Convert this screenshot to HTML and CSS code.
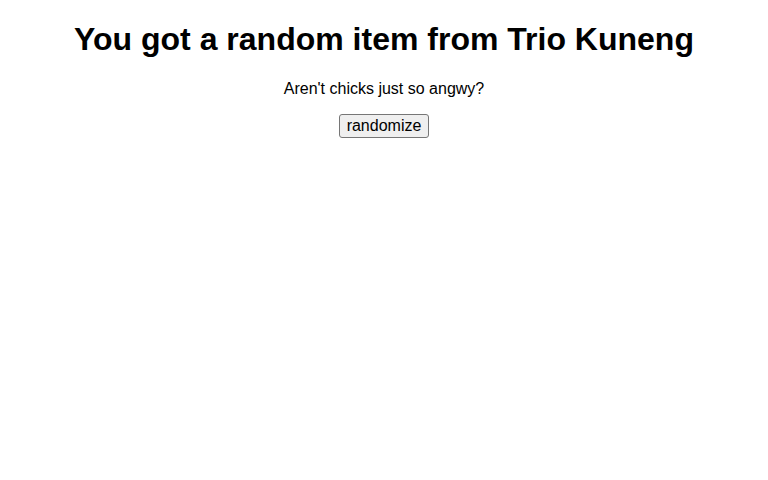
FILE: index.html
```html
<!DOCTYPE html>
<html lang="en">
<head>
  <meta charset="UTF-8" />
  <meta name="viewport" content="width=device-width, initial-scale=1" />
  <title>Trio Kuneng</title>
  <link rel="stylesheet" href="styles.css">
</head>
<body>
  <div class="container">
    <h1>You got a random item from Trio Kuneng</h1>
    <p id="item">Aren't chicks just so angwy?</p>
    <button id="randomize" class="randomize">randomize</button>
  </div>
</body>
</html>
```
FILE: styles.css
```css
body {
  font-family: "Liberation Sans", Arial, sans-serif;
  margin: 0;
  padding: 0 8px;
  background: #fff;
  color: #000;
}
.container {
  text-align: center;
}
h1 {
  font-size: 32px;
  margin: 21.44px 0;
}
p {
  font-size: 16px;
  margin: 16px 0;
}
.randomize {
  font-family: "Liberation Sans", Arial, sans-serif;
  font-size: 16px;
  line-height: 18px;
  padding: 2px 7px;
  background: #efefef;
  border: 1px solid #767676;
  border-radius: 3px;
  color: #000;
  cursor: pointer;
}
.randomize:hover {
  background: #e5e5e5;
}
```
